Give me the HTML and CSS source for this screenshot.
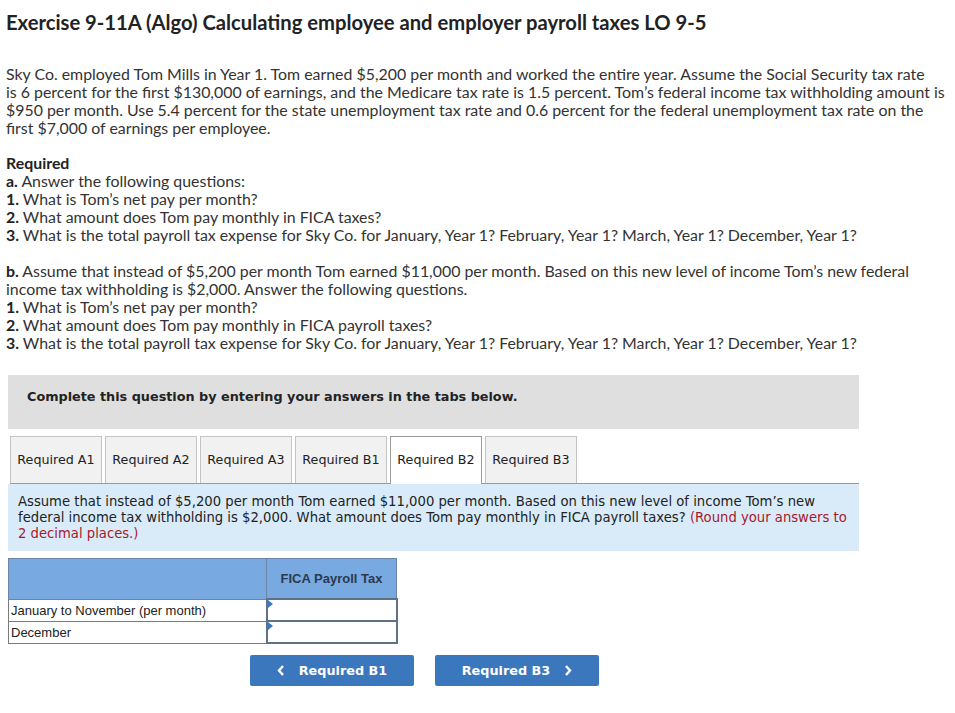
FILE: index.html
```html
<!DOCTYPE html>
<html>
<head>
<meta charset="utf-8">
<link rel="stylesheet" href="styles.css">
</head>
<body>
<h1 class="title">Exercise 9-11A (Algo) Calculating employee and employer payroll taxes LO 9-5</h1>
<p class="intro">Sky Co. employed Tom Mills in Year 1. Tom earned $5,200 per month and worked the entire year. Assume the Social Security tax rate<br>is 6 percent for the first $130,000 of earnings, and the Medicare tax rate is 1.5 percent. Tom’s federal income tax withholding amount is<br>$950 per month. Use 5.4 percent for the state unemployment tax rate and 0.6 percent for the federal unemployment tax rate on the<br>first $7,000 of earnings per employee.</p>
<div class="block">
  <div class="req-head">Required</div>
  <div><b>a.</b> Answer the following questions:</div>
  <div><b>1.</b> What is Tom’s net pay per month?</div>
  <div><b>2.</b> What amount does Tom pay monthly in FICA taxes?</div>
  <div><b>3.</b> What is the total payroll tax expense for Sky Co. for January, Year 1? February, Year 1? March, Year 1? December, Year 1?</div>
</div>
<div class="block part-b">
  <div><b>b.</b> Assume that instead of $5,200 per month Tom earned $11,000 per month. Based on this new level of income Tom’s new federal income tax withholding is $2,000. Answer the following questions.</div>
  <div><b>1.</b> What is Tom’s net pay per month?</div>
  <div><b>2.</b> What amount does Tom pay monthly in FICA payroll taxes?</div>
  <div><b>3.</b> What is the total payroll tax expense for Sky Co. for January, Year 1? February, Year 1? March, Year 1? December, Year 1?</div>
</div>
<div class="panel">
  <div class="instructions">Complete this question by entering your answers in the tabs below.</div>
  <div class="tabs">
    <div class="tab">Required A1</div>
    <div class="tab">Required A2</div>
    <div class="tab">Required A3</div>
    <div class="tab">Required B1</div>
    <div class="tab active">Required B2</div>
    <div class="tab">Required B3</div>
  </div>
  <div class="prompt">Assume that instead of $5,200 per month Tom earned $11,000 per month. Based on this new level of income Tom’s new federal income tax withholding is $2,000. What amount does Tom pay monthly in FICA payroll taxes? <span class="hint">(Round your answers to 2 decimal places.)</span></div>
  <table class="answer">
    <tr class="head"><th class="label-col"></th><th class="val-col">FICA Payroll Tax</th></tr>
    <tr><td class="label">January to November (per month)</td><td class="input"><span class="marker"></span></td></tr>
    <tr><td class="label">December</td><td class="input"><span class="marker"></span></td></tr>
  </table>
  <div class="nav">
    <div class="btn"><svg class="chev" width="8" height="11" viewBox="0 0 8 11"><polyline points="6,1 2,5.5 6,10" fill="none" stroke="#fff" stroke-width="2.4"/></svg>Required B1</div>
    <div class="btn">Required B3<svg class="chev right" width="8" height="11" viewBox="0 0 8 11"><polyline points="2,1 6,5.5 2,10" fill="none" stroke="#fff" stroke-width="2.4"/></svg></div>
  </div>
</div>
</body>
</html>
```
FILE: styles.css
```css
html, body { background: #fff; }
body {
  margin: 0;
  padding: 0 6px;
  color: #333;
  font-family: Lato, "Liberation Sans", sans-serif;
}
.title {
  margin: 11px 0 0;
  font-size: 20.2px;
  line-height: 22px;
  font-weight: 700;
  color: #222;
}
.intro {
  margin: 32px 0 0;
  font-size: 15.9px;
  line-height: 18px;
  white-space: nowrap;
}
.block {
  margin-top: 17px;
  font-size: 15.9px;
  line-height: 18px;
}
.block b { font-weight: 700; color: #222; }
.req-head { font-weight: 700; color: #222; }
.part-b { margin-top: 18px; }
.panel {
  margin: 23px 0 0 2px;
  width: 851px;
}
.instructions {
  background: #dfdfdf;
  height: 54px;
  box-sizing: border-box;
  padding: 14px 0 0 19px;
  font-family: "DejaVu Sans", Verdana, sans-serif;
  font-weight: 700;
  font-size: 12.8px;
  line-height: 16px;
  color: #222;
}
.tabs {
  display: flex;
  gap: 3px;
  margin: 7px 0 0 2px;
  border-bottom: 1px solid #9a9a9a;
}
.tab {
  width: 92px;
  height: 47px;
  box-sizing: border-box;
  border: 1px solid #c4c4c4;
  border-bottom: none;
  background: #f1f1f1;
  font-family: "DejaVu Sans", Verdana, sans-serif;
  font-size: 12.7px;
  line-height: 46px;
  text-align: center;
  color: #222;
}
.tab.active {
  background: #fff;
  border-color: #9a9a9a;
  height: 48px;
  margin-bottom: -1px;
}
.prompt {
  background: #d9ebf9;
  padding: 10px 10px 9px 10px;
  font-family: "DejaVu Sans", Verdana, sans-serif;
  font-size: 13.2px;
  line-height: 16px;
  color: #222;
}
.hint { color: #a8192b; }
.answer {
  margin-top: 7px;
  border-collapse: collapse;
  font-family: "Liberation Sans", Arial, sans-serif;
  font-size: 13px;
  color: #222;
}
.answer th {
  background: #78a9e1;
  height: 39px;
  padding: 0;
  border: 1px solid #6a86a6;
  font-weight: 700;
  color: #2b3a4c;
}
.label-col { width: 257px; }
.val-col { width: 129px; }
.answer td {
  height: 20px;
  padding: 0;
  border: 1px solid #7a7a7a;
}
.answer td.label { padding-left: 2px; }
.answer td.input {
  border: 2px solid #5f7186;
  position: relative;
  background: #fff;
}
.marker {
  position: absolute;
  left: 0;
  top: 0;
  width: 0;
  height: 0;
  border-top: 4px solid transparent;
  border-bottom: 4px solid transparent;
  border-left: 5px solid #3b78c4;
}
.nav {
  display: flex;
  gap: 21px;
  margin: 11px 0 0 242px;
}
.btn {
  width: 164px;
  height: 31px;
  background: #3b77bd;
  border-radius: 2px;
  color: #fff;
  font-family: "DejaVu Sans", Verdana, sans-serif;
  font-weight: 700;
  font-size: 12.8px;
  display: flex;
  align-items: center;
  justify-content: center;
}
.chev { margin-right: 14px; }
.chev.right { margin: 0 0 0 14px; }
```
